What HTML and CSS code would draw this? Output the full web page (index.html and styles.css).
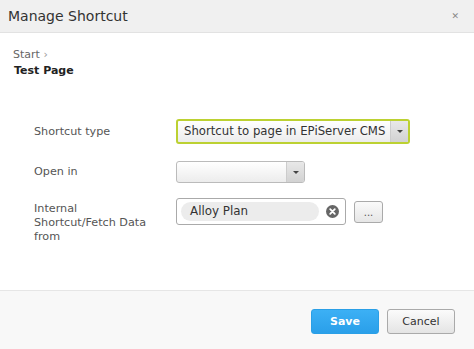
FILE: index.html
```html
<!DOCTYPE html>
<html lang="en">
<head>
    <meta charset="UTF-8">
    <title>Manage Shortcut</title>
    <link rel="stylesheet" href="styles.css">
</head>
<body>
    <div class="dialog">
        <div class="header">
            <h1>Manage Shortcut</h1>
            <span class="close">&#x2715;</span>
        </div>

        <div class="content">
            <div class="crumbs">
                <div class="crumb-parent">Start <span class="chev">&#x203A;</span></div>
                <div class="crumb-current">Test Page</div>
            </div>

            <div class="form">
                <div class="row row-type">
                    <label>Shortcut type</label>
                    <div class="select select-focus">
                        <span class="select-value">Shortcut to page in EPiServer CMS</span>
                        <span class="select-arrow"><span class="caret"></span></span>
                    </div>
                </div>

                <div class="row row-open">
                    <label>Open in</label>
                    <div class="select select-small">
                        <span class="select-value"></span>
                        <span class="select-arrow"><span class="caret"></span></span>
                    </div>
                </div>

                <div class="row row-link">
                    <label>Internal<br>Shortcut/Fetch Data<br>from</label>
                    <div class="picker">
                        <div class="chip">Alloy Plan</div>
                        <span class="clear">
                            <svg width="13" height="13" viewBox="0 0 13 13">
                                <circle cx="6.5" cy="6.5" r="6.5" fill="#666"/>
                                <path d="M4.2 4.2 L8.8 8.8 M8.8 4.2 L4.2 8.8" stroke="#fff" stroke-width="1.8" stroke-linecap="round"/>
                            </svg>
                        </span>
                    </div>
                    <button class="btn-more">...</button>
                </div>
            </div>
        </div>

        <div class="footer">
            <button class="btn btn-primary">Save</button>
            <button class="btn">Cancel</button>
        </div>
    </div>
</body>
</html>
```

FILE: styles.css
```css
* {
    margin: 0;
    padding: 0;
    box-sizing: border-box;
}

body {
    font-family: 'DejaVu Sans', Verdana, sans-serif;
    color: #333;
    background: #fff;
}

.dialog {
    width: 474px;
    height: 349px;
    display: flex;
    flex-direction: column;
    background: #fff;
}

.header {
    height: 33px;
    background: #f0f0f0;
    border-bottom: 1px solid #e2e2e2;
    display: flex;
    align-items: center;
    justify-content: space-between;
    padding: 0 15px 0 8px;
}

.header h1 {
    font-size: 14px;
    font-weight: normal;
    color: #333;
}

.close {
    font-size: 9px;
    color: #888;
}

.content {
    flex: 1;
    padding: 14px 0 0 13px;
}

.crumbs {
    font-size: 11px;
    line-height: 16px;
}

.crumb-parent {
    color: #666;
}

.chev {
    color: #999;
}

.crumb-current {
    font-weight: bold;
    color: #222;
    margin-left: 1px;
}

.form {
    margin-top: 40px;
    padding-left: 21px;
}

.row {
    display: flex;
    align-items: center;
}

.row label {
    width: 142px;
    font-size: 11.2px;
    line-height: 14px;
    color: #555;
}

.row-open {
    margin-top: 17px;
}

.row-link {
    margin-top: 15px;
    align-items: flex-start;
}

.row-link label {
    padding-top: 4px;
}

.select {
    display: flex;
    height: 24px;
    border: 1px solid #bbb;
    border-radius: 3px;
    background: linear-gradient(#fff, #ececec);
    overflow: hidden;
}

.select-focus {
    width: 234px;
    border: 2px solid #bcd132;
    height: 25px;
}

.select-small {
    width: 129px;
    height: 22px;
}

.select-value {
    flex: 1;
    font-size: 11.7px;
    line-height: 21px;
    padding-left: 6px;
    color: #333;
}

.select-arrow {
    width: 18px;
    border-left: 1px solid #ccc;
    background: linear-gradient(#e8e8e8, #d2d2d2);
    display: flex;
    align-items: center;
    justify-content: center;
}

.caret {
    width: 0;
    height: 0;
    border-left: 3px solid transparent;
    border-right: 3px solid transparent;
    border-top: 3px solid #444;
}

.picker {
    width: 170px;
    height: 27px;
    border: 1px solid #aaa;
    border-radius: 3px;
    display: flex;
    align-items: center;
    padding: 0 6px 0 4px;
    justify-content: space-between;
}

.chip {
    width: 138px;
    height: 19px;
    border-radius: 10px;
    background: #ececec;
    font-size: 11.9px;
    line-height: 19px;
    padding-left: 9px;
    color: #333;
}

.clear {
    display: flex;
}

.btn-more {
    margin: 3px 0 0 8px;
    width: 29px;
    height: 22px;
    border: 1px solid #aaa;
    border-radius: 3px;
    background: linear-gradient(#fafafa, #e6e6e6);
    font-family: inherit;
    font-size: 10px;
    color: #555;
}

.footer {
    height: 59px;
    border-top: 1px solid #e6e6e6;
    background: #f8f8f8;
    display: flex;
    justify-content: flex-end;
    align-items: flex-start;
    padding: 18px 19px 0 0;
    gap: 8px;
}

.btn {
    width: 68px;
    height: 25px;
    border: 1px solid #aaa;
    border-radius: 3px;
    background: linear-gradient(#fbfbfb, #e4e4e4);
    font-family: inherit;
    font-size: 11px;
    color: #333;
}

.btn-primary {
    border-color: #2a9fe6;
    background: linear-gradient(#3cb0f5, #2a9fe9);
    color: #fff;
    font-weight: bold;
}
```
